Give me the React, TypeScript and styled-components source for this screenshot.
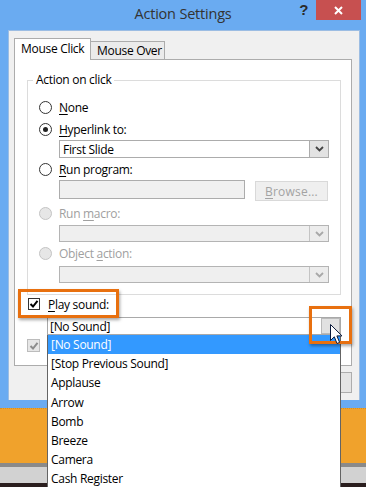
import React from "react";
import styled, { createGlobalStyle } from "styled-components";

const Global = createGlobalStyle`
  html, body { margin: 0; padding: 0; }
  body { width: 366px; height: 487px; overflow: hidden; background: #2a1e1e; }
`;

const FONT = `"Open Sans", "Noto Sans", "Liberation Sans", sans-serif`;

const Page = styled.div`
  width: 366px;
  height: 487px;
  position: relative;
  overflow: hidden;
  display: flex;
  flex-direction: column;
  font-family: ${FONT};
  font-size: 12px;
  letter-spacing: -0.3px;
  color: #000;
`;

const Window = styled.div`
  height: 408px;
  flex: none;
  box-sizing: border-box;
  background: #6aabf1;
  display: flex;
  flex-direction: column;
  padding-bottom: 8px;
`;

const TitleBar = styled.div`
  height: 30px;
  flex: none;
  display: grid;
  grid-template-columns: 1fr auto 1fr;
  align-items: start;
`;

const Title = styled.div`
  grid-column: 2;
  font-size: 14.5px;
  letter-spacing: -0.2px;
  line-height: 28px;
  color: #333;
`;

const TitleButtons = styled.div`
  display: flex;
  justify-content: flex-end;
  align-items: flex-start;
`;

const Help = styled.div`
  font-family: "Liberation Sans", sans-serif;
  font-weight: bold;
  font-size: 15px;
  line-height: 20px;
  color: #2b2b2b;
  margin-right: 8px;
`;

const Close = styled.div`
  width: 45px;
  height: 20px;
  background: #c75050;
  margin-right: 5px;
  display: flex;
  align-items: center;
  justify-content: center;
`;

const Panel = styled.div`
  flex: 1;
  margin: 0 6px 0 8px;
  background: #f0f0f0;
  border: 1px solid #9cbde3;
  border-bottom: none;
  box-sizing: border-box;
  padding: 7px 7px 0 5px;
  display: flex;
  flex-direction: column;
`;

const Tabs = styled.div`
  display: flex;
  align-items: flex-start;
  height: 22px;
  margin-bottom: -1px;
  position: relative;
  z-index: 1;
`;

const Tab = styled.div<{ $active?: boolean }>`
  box-sizing: border-box;
  border: 1px solid #acacac;
  border-bottom: ${(p) => (p.$active ? "none" : "1px solid #acacac")};
  background: ${(p) => (p.$active ? "#fff" : "#ebebeb")};
  width: ${(p) => (p.$active ? 77 : 75)}px;
  height: ${(p) => (p.$active ? 22 : 19)}px;
  margin-top: ${(p) => (p.$active ? 0 : 3)}px;
  margin-left: ${(p) => (p.$active ? 0 : -1)}px;
  padding-left: 6px;
  line-height: ${(p) => (p.$active ? 20 : 17)}px;
  white-space: nowrap;
`;

const TabContent = styled.div`
  height: 307px;
  flex: none;
  box-sizing: border-box;
  border: 1px solid #acacac;
  background: #fff;
  padding: 0 10px 0 12px;
  display: flex;
  flex-direction: column;
`;

const Group = styled.fieldset`
  margin: 12px 0 0 0;
  padding: 8px 11px 11px 11px;
  border: 1px solid #dcdcdc;
  display: flex;
  flex-direction: column;
  min-width: 0;
`;

const Legend = styled.legend`
  padding: 0 3px;
  margin-left: -6px;
  line-height: 16px;
`;

const RadioRow = styled.div<{ $mt?: number }>`
  height: 22px;
  margin-top: ${(p) => p.$mt ?? 0}px;
  display: flex;
  align-items: center;
  gap: 7px;
`;

const Radio = styled.span<{ $checked?: boolean; $disabled?: boolean }>`
  width: 13px;
  height: 13px;
  box-sizing: border-box;
  border-radius: 50%;
  border: 1px solid ${(p) => (p.$disabled ? "#c4c4c4" : "#333")};
  background: ${(p) => (p.$disabled ? "#e6e6e6" : "#fff")};
  display: flex;
  align-items: center;
  justify-content: center;
  flex: none;
  &::after {
    content: "";
    display: ${(p) => (p.$checked ? "block" : "none")};
    width: 5px;
    height: 5px;
    border-radius: 50%;
    background: #222;
  }
`;

const Label = styled.span<{ $disabled?: boolean }>`
  color: ${(p) => (p.$disabled ? "#a0a0a0" : "#000")};
  white-space: nowrap;
  u {
    text-decoration: underline;
    text-underline-offset: 2px;
  }
`;

const Select = styled.div<{ $disabled?: boolean; $h?: number; $mt?: number }>`
  height: ${(p) => p.$h ?? 18}px;
  margin: ${(p) => p.$mt ?? 0}px 0 0 20px;
  box-sizing: border-box;
  border: 1px solid ${(p) => (p.$disabled ? "#b4b4b4" : "#acacac")};
  background: ${(p) => (p.$disabled ? "#efefef" : "#fff")};
  display: flex;
  align-items: stretch;
`;

const SelectText = styled.div`
  flex: 1;
  padding-left: 3px;
  display: flex;
  align-items: center;
`;

const DropButton = styled.div<{ $disabled?: boolean }>`
  width: 19px;
  box-sizing: border-box;
  border-left: 1px solid ${(p) => (p.$disabled ? "#c4c4c4" : "#acacac")};
  background: ${(p) => (p.$disabled ? "#ececec" : "#e3e3e3")};
  display: flex;
  align-items: center;
  justify-content: center;
`;

const InputRow = styled.div`
  height: 21px;
  display: flex;
  align-items: flex-start;
  margin-left: 20px;
  gap: 10px;
`;

const TextInput = styled.div`
  width: 186px;
  height: 19px;
  box-sizing: border-box;
  border: 1px solid #acacac;
  background: #f0f0f0;
`;

const BrowseButton = styled.div`
  width: 73px;
  height: 20px;
  margin-top: 1px;
  box-sizing: border-box;
  border: 1px solid #d9d9d9;
  background: #efefef;
  color: #a3a3a3;
  display: flex;
  align-items: center;
  justify-content: center;
  letter-spacing: 0.2px;
  u { text-underline-offset: 2px; }
`;

const PlayRow = styled.div`
  height: 18px;
  margin-left: 1px;
  display: flex;
  align-items: center;
  gap: 8px;
  position: relative;
`;

const Checkbox = styled.span<{ $disabled?: boolean }>`
  width: ${(p) => (p.$disabled ? 13 : 12)}px;
  height: ${(p) => (p.$disabled ? 13 : 12)}px;
  box-sizing: border-box;
  border: 1px solid ${(p) => (p.$disabled ? "#bcbcbc" : "#333")};
  background: ${(p) => (p.$disabled ? "#e6e6e6" : "#fff")};
  display: flex;
  align-items: center;
  justify-content: center;
  flex: none;
`;

const Highlight = styled.div<{ $l: number; $t: number; $w: number; $h: number }>`
  position: absolute;
  left: ${(p) => p.$l}px;
  top: ${(p) => p.$t}px;
  width: ${(p) => p.$w}px;
  height: ${(p) => p.$h}px;
  box-sizing: border-box;
  border: 3px solid #e8700f;
  box-shadow: 1px 2px 3px rgba(0, 0, 0, 0.35);
  z-index: 20;
  pointer-events: none;
`;

const Combo = styled.div`
  margin: 4px 0 0 20px;
  height: 18px;
  box-sizing: border-box;
  border: 1px solid #a9a9a9;
  background: #fff;
  display: flex;
  position: relative;
`;

const ComboText = styled.div`
  flex: 1;
  padding-left: 2px;
  display: flex;
  align-items: center;
`;

const ComboButton = styled.div`
  width: 19px;
  box-sizing: border-box;
  border: 1px solid #b9b9b9;
  background: #e1e1e1;
`;

const List = styled.div`
  position: absolute;
  top: calc(100% + 1px);
  left: -1px;
  right: -1px;
  height: 200px;
  background: #fff;
  border-left: 1px solid #646464;
  border-right: 1px solid #646464;
  z-index: 10;
`;

const Item = styled.div<{ $selected?: boolean }>`
  height: 19.2px;
  padding-left: 3px;
  line-height: 19px;
  white-space: nowrap;
  background: ${(p) => (p.$selected ? "#3399ff" : "transparent")};
  color: ${(p) => (p.$selected ? "#fff" : "#000")};
`;

const Cursor = styled.svg`
  position: absolute;
  left: 282px;
  top: 6px;
  z-index: 30;
`;

const SecondRow = styled.div`
  margin-top: 4px;
  display: flex;
`;

const ButtonRow = styled.div`
  margin-top: 6px;
  display: flex;
  justify-content: flex-end;
  gap: 6px;
`;

const DialogButton = styled.div`
  width: 75px;
  height: 21px;
  box-sizing: border-box;
  border: 1px solid #adadad;
  background: #e5e5e5;
  display: flex;
  align-items: center;
  justify-content: center;
`;

const Band = styled.div<{ $h: number; $bg: string }>`
  height: ${(p) => p.$h}px;
  flex: none;
  background: ${(p) => p.$bg};
`;

const OrangeBand = styled.div`
  height: 55px;
  flex: none;
  background: #f0a22c;
  border-top: 1px dotted #d89020;
  box-sizing: border-box;
`;

const Chevron = ({ color }: { color: string }) => (
  <svg width="9" height="6" viewBox="0 0 9 6">
    <polyline points="1,1 4.5,4.5 8,1" fill="none" stroke={color} strokeWidth="1.8" />
  </svg>
);

const Check = ({ color }: { color: string }) => (
  <svg width="10" height="10" viewBox="0 0 10 10">
    <polyline points="1.5,5 4,7.5 8.5,1.8" fill="none" stroke={color} strokeWidth="2" />
  </svg>
);

const sounds = [
  "[No Sound]",
  "[Stop Previous Sound]",
  "Applause",
  "Arrow",
  "Bomb",
  "Breeze",
  "Camera",
  "Cash Register",
];

export default function App() {
  return (
    <Page>
      <Global />
      <Window>
        <TitleBar>
          <Title>Action Settings</Title>
          <TitleButtons>
            <Help>?</Help>
            <Close>
              <svg width="9" height="9" viewBox="0 0 9 9">
                <path d="M1 1 L8 8 M8 1 L1 8" stroke="#fff" strokeWidth="2" />
              </svg>
            </Close>
          </TitleButtons>
        </TitleBar>
        <Panel>
          <Tabs>
            <Tab $active>Mouse Click</Tab>
            <Tab>Mouse Over</Tab>
          </Tabs>
          <TabContent>
            <Group>
              <Legend>Action on click</Legend>
              <RadioRow>
                <Radio />
                <Label>
                  <u>N</u>one
                </Label>
              </RadioRow>
              <RadioRow>
                <Radio $checked />
                <Label>
                  <u>H</u>yperlink to:
                </Label>
              </RadioRow>
              <Select>
                <SelectText>First Slide</SelectText>
                <DropButton>
                  <Chevron color="#444" />
                </DropButton>
              </Select>
              <RadioRow>
                <Radio />
                <Label>
                  <u>R</u>un program:
                </Label>
              </RadioRow>
              <InputRow>
                <TextInput />
                <BrowseButton>
                  <span>
                    <u>B</u>rowse...
                  </span>
                </BrowseButton>
              </InputRow>
              <RadioRow $mt={1}>
                <Radio $disabled />
                <Label $disabled>
                  Run <u>m</u>acro:
                </Label>
              </RadioRow>
              <Select $disabled $h={17} $mt={1}>
                <SelectText />
                <DropButton $disabled>
                  <Chevron color="#a8a8a8" />
                </DropButton>
              </Select>
              <RadioRow>
                <Radio $disabled />
                <Label $disabled>
                  Object <u>a</u>ction:
                </Label>
              </RadioRow>
              <Select $disabled $h={17} $mt={2}>
                <SelectText />
                <DropButton $disabled>
                  <Chevron color="#a8a8a8" />
                </DropButton>
              </Select>
            </Group>
            <PlayRow>
              <Checkbox>
                <Check color="#000" />
              </Checkbox>
              <Label>
                <u>P</u>lay sound:
              </Label>
              <Highlight $l={-10} $t={-6} $w={101} $h={29} />
            </PlayRow>
            <Combo>
              <ComboText>[No Sound]</ComboText>
              <ComboButton />
              <List>
                {sounds.map((s, i) => (
                  <Item key={s} $selected={i === 0}>
                    {s}
                  </Item>
                ))}
              </List>
              <Highlight $l={261} $t={-12} $w={43} $h={38} />
              <Cursor width="13" height="21" viewBox="0 0 13 21">
                <path
                  d="M0.5 0.5 L0.5 16.5 L4.3 12.8 L7 19.5 L9.6 18.4 L6.9 11.9 L12 11.9 Z"
                  fill="#fff"
                  stroke="#0b1a3a"
                  strokeWidth="1"
                  strokeLinejoin="miter"
                />
              </Cursor>
            </Combo>
            <SecondRow>
              <Checkbox $disabled>
                <Check color="#8c8c8c" />
              </Checkbox>
            </SecondRow>
          </TabContent>
          <ButtonRow>
            <DialogButton>OK</DialogButton>
            <DialogButton>Cancel</DialogButton>
          </ButtonRow>
        </Panel>
      </Window>
      <OrangeBand />
      <Band $h={4} $bg="#8a8a8a" />
      <Band $h={16} $bg="#d2d2d2" />
      <Band $h={4} $bg="#2a1e1e" />
    </Page>
  );
}
